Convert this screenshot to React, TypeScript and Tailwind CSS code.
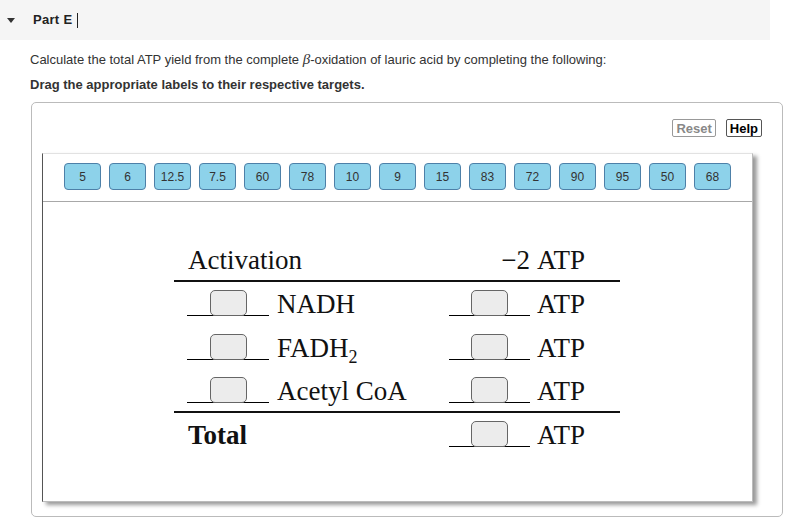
const LABELS = ["5", "6", "12.5", "7.5", "60", "78", "10", "9", "15", "83", "72", "90", "95", "50", "68"];

const serif = "font-['Liberation_Serif','Times_New_Roman',serif] text-[27px] leading-[27px] text-[#111]";

function DropBox() {
  return <div className="w-[37px] h-[26px] -mb-px rounded-[5px] border border-[#666] bg-[#ececec]" />;
}

function Blank({ width }: { width: string }) {
  return (
    <div className={`${width} border-b border-black flex justify-center`}>
      <DropBox />
    </div>
  );
}

function Row({ label, height }: { label: React.ReactNode; height: string }) {
  return (
    <div className={`flex items-end ${height}`}>
      <div className="w-[275px] flex items-end pl-[13px] gap-[8px]">
        <Blank width="w-[82px]" />
        <span className={`${serif} -mb-[2px]`}>{label}</span>
      </div>
      <div className="flex items-end gap-[7px]">
        <Blank width="w-[81px]" />
        <span className={`${serif} -mb-[2px]`}>ATP</span>
      </div>
    </div>
  );
}

export default function App() {
  return (
    <div className="w-[787px] h-[529px] bg-white font-['Liberation_Sans',Arial,sans-serif] text-[#333]">
      {/* Part header */}
      <div className="w-[770px] h-[40px] bg-[#f5f5f5] flex items-center">
        <div className="ml-[7px] mt-[1px] w-0 h-0 border-l-[4px] border-r-[4px] border-t-[5px] border-l-transparent border-r-transparent border-t-[#333]" />
        <span className="ml-[18px] text-[13px] font-bold text-[#222] tracking-[0.3px]">Part E</span>
        <span className="ml-[5px] w-px h-[15px] bg-[#222]" />
      </div>

      <div className="pl-[30px]">
        <p className="mt-[11px] text-[13px] leading-[17px] text-[#333]">
          Calculate the total ATP yield from the complete{" "}
          <span className="font-['Liberation_Serif',serif] italic text-[15px]">β</span>-oxidation of lauric acid by completing the following:
        </p>
        <p className="mt-[8px] text-[13px] leading-[17px] font-bold text-[#333]">
          Drag the appropriate labels to their respective targets.
        </p>

        {/* Outer box */}
        <div className="mt-[9px] ml-px w-[752px] h-[415px] rounded-[5px] border border-[#bbb] flex flex-col">
          <div className="flex justify-end gap-[10px] pt-[16px] pr-[20px]">
            <button className="h-[18px] px-[3px] rounded-[2px] border border-[#999] bg-white text-[13px] font-bold text-[#888] leading-none">
              Reset
            </button>
            <button className="h-[18px] px-[3px] rounded-[2px] border border-[#555] bg-white text-[13px] font-bold text-black leading-none">
              Help
            </button>
          </div>

          {/* Inner panel */}
          <div className="mt-[16px] ml-[10px] w-[711px] h-[349px] bg-white border border-[#bbb] border-t-[#e2e2e2] border-l-[#555] shadow-[4px_3px_4px_rgba(0,0,0,0.4)]">
            <div className="flex gap-[8px] pl-[21px] pt-[9px] pb-[11px] border-b border-[#a8a8a8]">
              {LABELS.map((l) => (
                <div
                  key={l}
                  className="w-[37px] h-[27px] rounded-[4px] border border-[#4d80a8] bg-[#8dd2ea] flex items-center justify-center text-[12px] text-[#333]"
                >
                  {l}
                </div>
              ))}
            </div>

            {/* ATP table */}
            <div className="ml-[131px] mt-[41px] w-[446px]">
              <div className="flex items-end h-[37px]">
                <div className="w-[275px] pl-[14px]">
                  <span className={`${serif} block mb-[6px]`}>Activation</span>
                </div>
                <div className="flex items-end gap-[7px]">
                  <span className={`${serif} w-[81px] text-right mb-[6px]`}>−2</span>
                  <span className={`${serif} mb-[6px]`}>ATP</span>
                </div>
              </div>
              <div className="border-t-2 border-b-2 border-[#111] pb-[8px]">
                <Row label="NADH" height="h-[34px]" />
                <Row
                  label={
                    <>
                      FADH<span className="inline-block text-[18px] leading-none translate-y-[6px]">2</span>
                    </>
                  }
                  height="h-[44px]"
                />
                <Row label="Acetyl CoA" height="h-[43px]" />
              </div>
              <div className="flex items-end h-[34px]">
                <div className="w-[275px] pl-[14px]">
                  <span className={`${serif} font-bold block -mb-[2px]`}>Total</span>
                </div>
                <div className="flex items-end gap-[7px]">
                  <Blank width="w-[81px]" />
                  <span className={`${serif} -mb-[2px]`}>ATP</span>
                </div>
              </div>
            </div>
          </div>
        </div>
      </div>
    </div>
  );
}
